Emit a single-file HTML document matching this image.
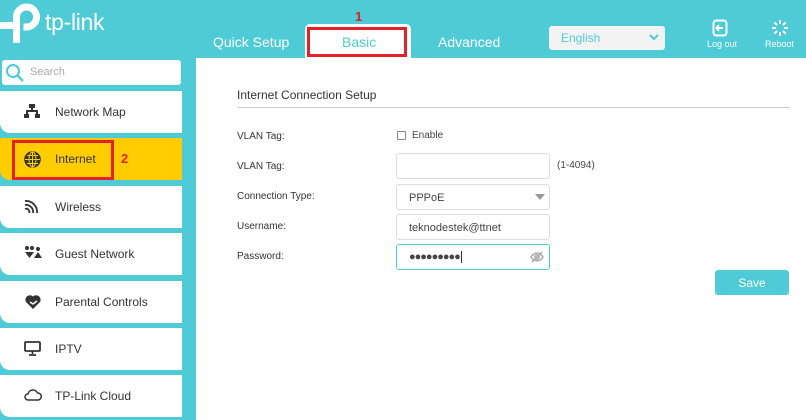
<!DOCTYPE html>
<html><head><meta charset="utf-8"><style>
*{margin:0;padding:0;box-sizing:border-box}
body{width:806px;height:420px;overflow:hidden;background:#4ecbd6;font-family:"Liberation Sans",sans-serif;position:relative}
.a{position:absolute}
.main{left:196px;top:58px;width:610px;height:362px;background:#fff}
.item{position:absolute;left:0;width:182px;height:42px;background:#fff;border-radius:0 0 0 10px;font-size:12px;color:#333}
.item span{position:absolute;left:55px;top:14px}
.item svg{position:absolute;left:24px;top:13px}
.lbl{position:absolute;left:237px;font-size:10px;color:#333}
.inp{position:absolute;left:396px;width:154px;height:26px;border:1px solid #ddd;border-radius:3px;font-size:11px;color:#444;padding:7px 0 0 12px}
</style></head><body>
<!-- logo -->
<svg class="a" style="left:0;top:0" width="44" height="44" viewBox="0 0 44 44"><path d="M16.5 43V17a10 10 0 1 1 10 10h-3" fill="none" stroke="#fff" stroke-width="7"/><path d="M0 22h18v7H0z" fill="#fff"/></svg>
<div class="a" style="left:45px;top:9px;color:#fff;font-size:23px;letter-spacing:-0.3px">tp-link</div>
<div class="a" style="left:213px;top:34px;color:#fff;font-size:14px">Quick Setup</div>
<div class="a" style="left:305px;top:24px;width:106px;height:36px;background:#fff;border-radius:5px 5px 0 0"></div>
<div class="a" style="left:307px;top:27px;width:100px;height:30px;border:3px solid #e4202a"></div>
<div class="a" style="left:342px;top:34px;color:#4ecbd6;font-size:14px">Basic</div>
<div class="a" style="left:355px;top:9px;color:#d52028;font-size:13px;font-weight:bold">1</div>
<div class="a" style="left:438px;top:34px;color:#fff;font-size:14px">Advanced</div>
<div class="a" style="left:549px;top:26px;width:116px;height:24px;background:#f3f3f3;border-radius:3px;color:#4ecbd6;font-size:12px;padding:5px 0 0 12px">English<svg style="position:absolute;right:6px;top:8px" width="10" height="7" viewBox="0 0 10 7"><path d="M1 1l4 4 4-4" fill="none" stroke="#4ecbd6" stroke-width="2"/></svg></div>
<svg class="a" style="left:712px;top:19px" width="16" height="18" viewBox="0 0 16 18"><rect x="1.5" y="1.5" width="13" height="15" rx="3" fill="none" stroke="#fff" stroke-width="2"/><path d="M11 9H5M7 6L4.5 9 7 12" stroke="#fff" stroke-width="2" fill="none"/></svg>
<div class="a" style="left:707px;top:39px;color:#fff;font-size:9px">Log out</div>
<svg class="a" style="left:771px;top:19px" width="18" height="18" viewBox="0 0 18 18" stroke="#fff" stroke-width="2"><path d="M9 1v4M9 13v4M1 9h4M13 9h4M3.3 3.3l2.8 2.8M11.9 11.9l2.8 2.8M3.3 14.7l2.8-2.8M11.9 6.1l2.8-2.8"/></svg>
<div class="a" style="left:765px;top:39px;color:#fff;font-size:9px">Reboot</div>
<!-- sidebar -->
<div class="a" style="left:2px;top:60px;width:179px;height:25px;background:#fff;border-radius:3px"></div>
<svg class="a" style="left:5px;top:63px" width="20" height="20" viewBox="0 0 20 20"><circle cx="8" cy="8" r="6" fill="none" stroke="#4ecbd6" stroke-width="2"/><path d="M12.5 12.5L18 18" stroke="#4ecbd6" stroke-width="2.5"/></svg>
<div class="a" style="left:30px;top:66px;color:#aaa;font-size:11px">Search</div>
<div class="item" style="top:91px"><svg width="16" height="14" viewBox="0 0 16 14" fill="#333"><rect x="5" y="0" width="6" height="4"/><rect x="7" y="4" width="2" height="3"/><rect x="2" y="6" width="12" height="2"/><rect x="2" y="7" width="2" height="3"/><rect x="12" y="7" width="2" height="3"/><rect x="0" y="10" width="5" height="4"/><rect x="11" y="10" width="5" height="4"/></svg><span>Network Map</span></div>
<div class="item" style="top:138px;background:#ffcc00"><svg width="17" height="17" viewBox="0 0 17 17" fill="none" stroke="#333" stroke-width="1.6"><circle cx="8.5" cy="8.5" r="7.5" fill="#333"/><path d="M1 8.5h15M8.5 1v15M3 4.5h11M3 12.5h11" stroke="#ffcc00" stroke-width="1"/><ellipse cx="8.5" cy="8.5" rx="3.5" ry="7.5" stroke="#ffcc00" stroke-width="1"/></svg><span style="left:55px">Internet</span></div>
<div class="a" style="left:12px;top:140px;width:102px;height:40px;border:3px solid #e4202a"></div>
<div class="a" style="left:121px;top:151px;color:#e4202a;font-size:13px;font-weight:bold">2</div>
<div class="item" style="top:186px"><svg width="15" height="14" viewBox="0 0 15 14" fill="none" stroke="#333" stroke-width="1.8"><path d="M1 2a11 11 0 0 1 12 12M1 6a7 7 0 0 1 8 8M1 10a3 3 0 0 1 4 4"/></svg><span>Wireless</span></div>
<div class="item" style="top:233px"><svg width="18" height="13" viewBox="0 0 18 13" fill="#333"><circle cx="3" cy="2" r="2"/><circle cx="8" cy="2" r="2"/><path d="M1 6h9L5.5 12z"/><circle cx="14" cy="3" r="2"/><path d="M10 12l4-6 4 6z"/></svg><span>Guest Network</span></div>
<div class="item" style="top:281px"><svg width="18" height="15" viewBox="0 0 18 15"><path d="M9 15L2 8A4.5 4.5 0 0 1 9 2.5 4.5 4.5 0 0 1 16 8z" fill="#333"/><path d="M6 8l3 2 4-3" stroke="#fff" stroke-width="1.5" fill="none"/></svg><span>Parental Controls</span></div>
<div class="item" style="top:328px"><svg width="17" height="15" viewBox="0 0 17 15" fill="none" stroke="#333" stroke-width="1.8"><rect x="1" y="1" width="15" height="9" rx="1"/><path d="M8.5 10v3M5 14h7"/></svg><span>IPTV</span></div>
<div class="item" style="top:375px"><svg width="18" height="13" viewBox="0 0 18 13" fill="none" stroke="#333" stroke-width="1.5"><path d="M4 12a3 3 0 0 1 0-6 5 5 0 0 1 9.5-1A3.5 3.5 0 0 1 14 12z"/></svg><span>TP-Link Cloud</span></div>
<!-- main -->
<div class="a main"></div>
<div class="a" style="left:237px;top:88px;font-size:12px;color:#333">Internet Connection Setup</div>
<div class="a" style="left:237px;top:107px;width:553px;height:1px;background:#ccc"></div>
<div class="lbl" style="top:131px">VLAN Tag:</div>
<div class="lbl" style="top:161px">VLAN Tag:</div>
<div class="lbl" style="top:191px">Connection Type:</div>
<div class="lbl" style="top:221px">Username:</div>
<div class="lbl" style="top:251px">Password:</div>
<div class="a" style="left:397px;top:131px;width:9px;height:9px;border:1px solid #888;border-radius:1px"></div>
<div class="a" style="left:412px;top:130px;font-size:10px;color:#444">Enable</div>
<div class="inp" style="top:153px"></div>
<div class="a" style="left:557px;top:160px;font-size:10px;color:#444">(1-4094)</div>
<div class="inp" style="top:184px">PPPoE<span style="position:absolute;right:4px;top:9px;border:5px solid transparent;border-top:6px solid #999"></span></div>
<div class="inp" style="top:214px">teknodestek@ttnet</div>
<div class="inp" style="top:244px;border-color:#4ecbd6;padding-top:6px;letter-spacing:-1px;color:#444">●●●●●●●●●<span style="border-left:1px solid #333;margin-left:1px"></span><svg style="position:absolute;right:5px;top:6px" width="14" height="12" viewBox="0 0 14 12" fill="none" stroke="#aaa" stroke-width="1.5"><path d="M1 6c3-5 9-5 12 0-3 5-9 5-12 0z"/><circle cx="7" cy="6" r="2"/><path d="M2 11L12 1"/></svg></div>
<div class="a" style="left:715px;top:270px;width:74px;height:25px;background:#4ecbd6;border-radius:3px;color:#fff;font-size:12px;text-align:center;padding-top:6px">Save</div>
</body></html>
